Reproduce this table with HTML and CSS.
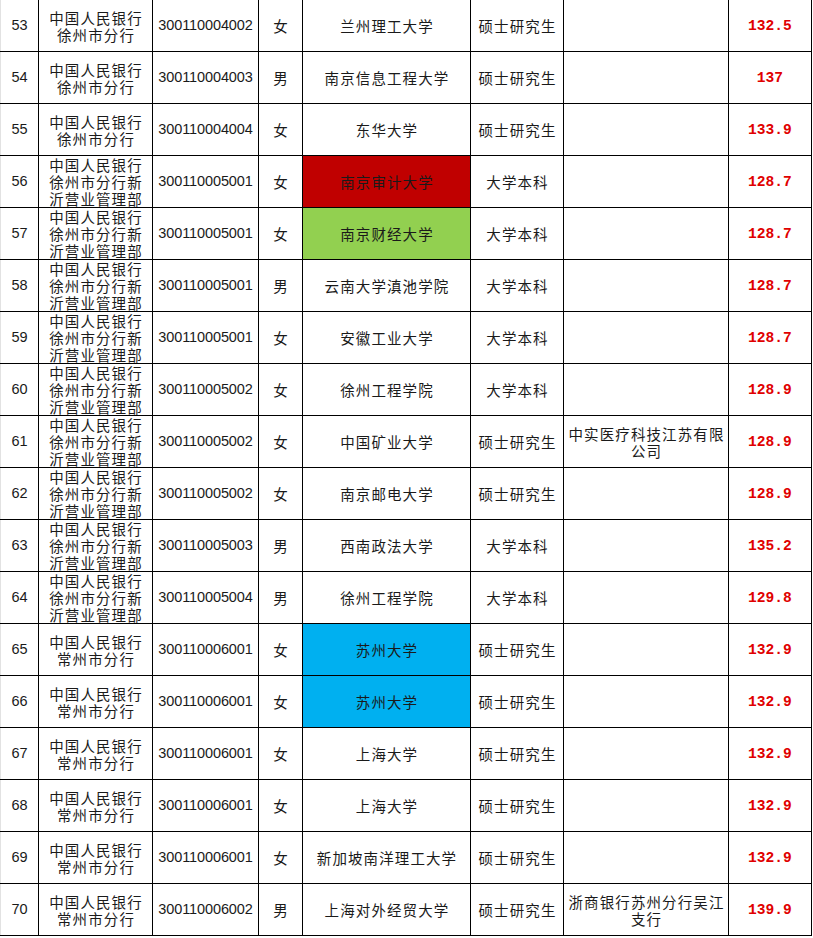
FILE: index.html
```html
<!DOCTYPE html>
<html lang="zh-CN">
<head>
<meta charset="utf-8">
<title>录用名单</title>
<link rel="stylesheet" href="styles.css">
</head>
<body>
<table class="sheet">
<colgroup>
<col class="c-no"><col class="c-org"><col class="c-id"><col class="c-sex"><col class="c-school"><col class="c-degree"><col class="c-work"><col class="c-score">
</colgroup>
<tbody>
<tr><td class="num">53</td><td class="cn">中国人民银行<br>徐州市分行</td><td class="num">300110004002</td><td class="cn">女</td><td class="cn">兰州理工大学</td><td class="cn">硕士研究生</td><td class="cn"></td><td class="score">132.5</td></tr>
<tr><td class="num">54</td><td class="cn">中国人民银行<br>徐州市分行</td><td class="num">300110004003</td><td class="cn">男</td><td class="cn">南京信息工程大学</td><td class="cn">硕士研究生</td><td class="cn"></td><td class="score">137</td></tr>
<tr><td class="num">55</td><td class="cn">中国人民银行<br>徐州市分行</td><td class="num">300110004004</td><td class="cn">女</td><td class="cn">东华大学</td><td class="cn">硕士研究生</td><td class="cn"></td><td class="score">133.9</td></tr>
<tr><td class="num">56</td><td class="cn tri">中国人民银行<br>徐州市分行新<br>沂营业管理部</td><td class="num">300110005001</td><td class="cn">女</td><td class="cn hl-red">南京审计大学</td><td class="cn">大学本科</td><td class="cn"></td><td class="score">128.7</td></tr>
<tr><td class="num">57</td><td class="cn tri">中国人民银行<br>徐州市分行新<br>沂营业管理部</td><td class="num">300110005001</td><td class="cn">女</td><td class="cn hl-green">南京财经大学</td><td class="cn">大学本科</td><td class="cn"></td><td class="score">128.7</td></tr>
<tr><td class="num">58</td><td class="cn tri">中国人民银行<br>徐州市分行新<br>沂营业管理部</td><td class="num">300110005001</td><td class="cn">男</td><td class="cn">云南大学滇池学院</td><td class="cn">大学本科</td><td class="cn"></td><td class="score">128.7</td></tr>
<tr><td class="num">59</td><td class="cn tri">中国人民银行<br>徐州市分行新<br>沂营业管理部</td><td class="num">300110005001</td><td class="cn">女</td><td class="cn">安徽工业大学</td><td class="cn">大学本科</td><td class="cn"></td><td class="score">128.7</td></tr>
<tr><td class="num">60</td><td class="cn tri">中国人民银行<br>徐州市分行新<br>沂营业管理部</td><td class="num">300110005002</td><td class="cn">女</td><td class="cn">徐州工程学院</td><td class="cn">大学本科</td><td class="cn"></td><td class="score">128.9</td></tr>
<tr><td class="num">61</td><td class="cn tri">中国人民银行<br>徐州市分行新<br>沂营业管理部</td><td class="num">300110005002</td><td class="cn">女</td><td class="cn">中国矿业大学</td><td class="cn">硕士研究生</td><td class="cn">中实医疗科技江苏有限<br>公司</td><td class="score">128.9</td></tr>
<tr><td class="num">62</td><td class="cn tri">中国人民银行<br>徐州市分行新<br>沂营业管理部</td><td class="num">300110005002</td><td class="cn">女</td><td class="cn">南京邮电大学</td><td class="cn">硕士研究生</td><td class="cn"></td><td class="score">128.9</td></tr>
<tr><td class="num">63</td><td class="cn tri">中国人民银行<br>徐州市分行新<br>沂营业管理部</td><td class="num">300110005003</td><td class="cn">男</td><td class="cn">西南政法大学</td><td class="cn">大学本科</td><td class="cn"></td><td class="score">135.2</td></tr>
<tr><td class="num">64</td><td class="cn tri">中国人民银行<br>徐州市分行新<br>沂营业管理部</td><td class="num">300110005004</td><td class="cn">男</td><td class="cn">徐州工程学院</td><td class="cn">大学本科</td><td class="cn"></td><td class="score">129.8</td></tr>
<tr><td class="num">65</td><td class="cn">中国人民银行<br>常州市分行</td><td class="num">300110006001</td><td class="cn">女</td><td class="cn hl-blue">苏州大学</td><td class="cn">硕士研究生</td><td class="cn"></td><td class="score">132.9</td></tr>
<tr><td class="num">66</td><td class="cn">中国人民银行<br>常州市分行</td><td class="num">300110006001</td><td class="cn">女</td><td class="cn hl-blue">苏州大学</td><td class="cn">硕士研究生</td><td class="cn"></td><td class="score">132.9</td></tr>
<tr><td class="num">67</td><td class="cn">中国人民银行<br>常州市分行</td><td class="num">300110006001</td><td class="cn">女</td><td class="cn">上海大学</td><td class="cn">硕士研究生</td><td class="cn"></td><td class="score">132.9</td></tr>
<tr><td class="num">68</td><td class="cn">中国人民银行<br>常州市分行</td><td class="num">300110006001</td><td class="cn">女</td><td class="cn">上海大学</td><td class="cn">硕士研究生</td><td class="cn"></td><td class="score">132.9</td></tr>
<tr><td class="num">69</td><td class="cn">中国人民银行<br>常州市分行</td><td class="num">300110006001</td><td class="cn">女</td><td class="cn">新加坡南洋理工大学</td><td class="cn">硕士研究生</td><td class="cn"></td><td class="score">132.9</td></tr>
<tr><td class="num">70</td><td class="cn">中国人民银行<br>常州市分行</td><td class="num">300110006002</td><td class="cn">男</td><td class="cn">上海对外经贸大学</td><td class="cn">硕士研究生</td><td class="cn">浙商银行苏州分行吴江<br>支行</td><td class="score">139.9</td></tr>
</tbody>
</table>
</body>
</html>
```

FILE: styles.css
```css
html, body {
  margin: 0;
  padding: 0;
  background: #fff;
}

.sheet {
  border-collapse: collapse;
  table-layout: fixed;
  width: 811px;
  color: #1a1a1a;
  font-family: "Liberation Sans", "Noto Sans CJK SC", sans-serif;
}

.c-no { width: 38px; }
.c-org { width: 114px; }
.c-id { width: 106px; }
.c-sex { width: 44px; }
.c-school { width: 168px; }
.c-degree { width: 93px; }
.c-work { width: 165px; }
.c-score { width: 83px; }

.sheet td {
  border: 1px solid #000;
  height: 51px;
  padding: 0;
  text-align: center;
  vertical-align: middle;
  overflow: hidden;
  white-space: nowrap;
}

.sheet tr:first-child td {
  border-top: none;
}

.sheet td:first-child {
  border-left: 1px solid #e2e2e2;
}

.num {
  font-size: 14.5px;
  letter-spacing: -0.1px;
  line-height: 17px;
}

.cn {
  font-family: "Noto Sans CJK SC", sans-serif;
  font-size: 14.5px;
  letter-spacing: 1.1px;
  line-height: 17px;
  padding-left: 1px !important;
}

.tri {
  line-height: 17px;
}

.score {
  font-family: "Liberation Mono", "DejaVu Sans Mono", monospace;
  font-weight: bold;
  font-size: 14.6px;
  color: #e00000;
}

.hl-red { background: #c00000; }
.hl-green { background: #92d050; }
.hl-blue { background: #00b0f0; }
```
